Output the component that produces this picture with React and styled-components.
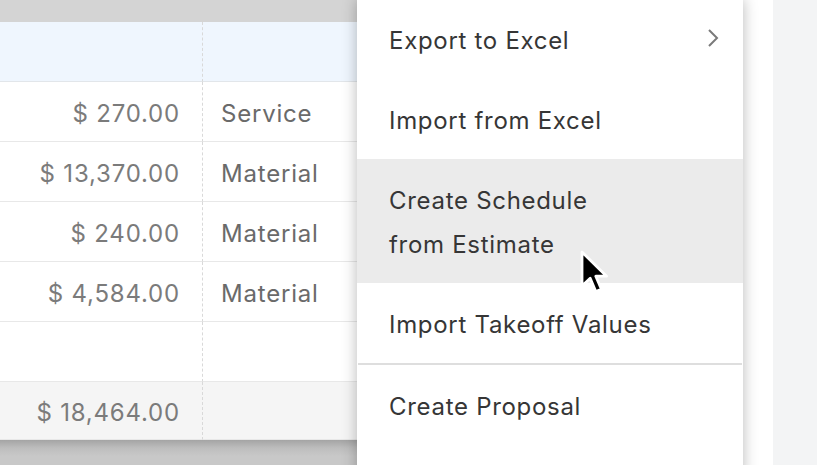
import React from "react";
import styled, { createGlobalStyle } from "styled-components";

const Global = createGlobalStyle`
  html, body { margin: 0; padding: 0; background: #ffffff; }
  body { font-family: Inter, "Liberation Sans", Arial, sans-serif; overflow: hidden; }
  * { box-sizing: border-box; }
`;

const Page = styled.div`
  position: relative;
  width: 817px;
  height: 465px;
  display: flex;
  overflow: hidden;
  background: #ffffff;
`;

const Main = styled.div`
  width: 773px;
  display: flex;
  flex-direction: column;
`;

const SidePanel = styled.div`
  flex: 1;
  background: #f3f4f5;
`;

const TopBar = styled.div`
  height: 22px;
  width: 743px;
  background: #d4d4d4;
`;

const Table = styled.div`
  width: 743px;
  display: grid;
  grid-template-columns: 203px 1fr;
`;

const Cell = styled.div`
  height: ${(p) => p.$h || 60}px;
  display: flex;
  align-items: center;
  padding-top: 3px;
  border-bottom: 1px solid ${(p) => (p.$head ? "#e2e6ea" : "#e8e8e8")};
  background: ${(p) => (p.$head ? "#eff6fe" : p.$total ? "#f5f5f5" : "#ffffff")};
  font-size: 24px;
  letter-spacing: 0.8px;
`;

const AmountCell = styled(Cell)`
  justify-content: flex-end;
  padding-right: 22px;
  color: #7b7b7b;
  border-right: 1px dashed #d9d9d9;
`;

const TypeCell = styled(Cell)`
  padding-left: 18px;
  color: #6a6a6a;
`;

const BottomShade = styled.div`
  flex: 1;
  width: 743px;
  background: linear-gradient(#a4a4a4 0px, #bdbdbd 8px, #c8c8c8 16px);
`;

const Menu = styled.div`
  position: absolute;
  left: 357px;
  top: -1px;
  width: 386px;
  height: 480px;
  background: #ffffff;
  box-shadow: 0 0 14px rgba(0, 0, 0, 0.28);
  display: flex;
  flex-direction: column;
`;

const MenuItem = styled.div`
  display: flex;
  align-items: center;
  justify-content: space-between;
  padding: 20px 24px 16px 32px;
  line-height: 44px;
  font-size: 24px;
  letter-spacing: 0.7px;
  color: #363636;
  background: ${(p) => (p.$hover ? "#ebebeb" : "transparent")};
`;

const Separator = styled.div`
  height: 2px;
  background: #dedede;
  margin: 0 1px;
`;

const Chevron = styled.svg`
  width: 14px;
  height: 20px;
  margin-top: -6px;
  margin-right: -1px;
`;

const Cursor = styled.svg`
  position: absolute;
  left: 579px;
  top: 249px;
  width: 30px;
  height: 48px;
`;

const rows = [
  { amount: "$ 270.00", type: "Service" },
  { amount: "$ 13,370.00", type: "Material" },
  { amount: "$ 240.00", type: "Material" },
  { amount: "$ 4,584.00", type: "Material" },
  { amount: "", type: "" },
];

export default function App() {
  return (
    <>
      <Global />
      <Page>
        <Main>
          <TopBar />
          <Table>
            <AmountCell $head />
            <TypeCell $head />
            {rows.map((r, i) => (
              <React.Fragment key={i}>
                <AmountCell>{r.amount}</AmountCell>
                <TypeCell>{r.type}</TypeCell>
              </React.Fragment>
            ))}
            <AmountCell $total $h={58}>$ 18,464.00</AmountCell>
            <TypeCell $total $h={58} />
          </Table>
          <BottomShade />
        </Main>
        <SidePanel />
        <Menu>
          <MenuItem>
            <span>Export to Excel</span>
            <Chevron viewBox="0 0 14 20">
              <path d="M3 2 L11 10 L3 18" fill="none" stroke="#7a7a7a" strokeWidth="2" />
            </Chevron>
          </MenuItem>
          <MenuItem>
            <span>Import from Excel</span>
          </MenuItem>
          <MenuItem $hover>
            <span>
              Create Schedule
              <br />
              from Estimate
            </span>
          </MenuItem>
          <MenuItem>
            <span>Import Takeoff Values</span>
          </MenuItem>
          <Separator />
          <MenuItem>
            <span>Create Proposal</span>
          </MenuItem>
        </Menu>
        <Cursor viewBox="0 0 15 24">
          <path
            d="M1.5 1.5 L1.5 18.5 L5.6 14.6 L8.4 21.3 L11.2 20.1 L8.4 13.6 L13.8 13.6 Z"
            fill="#000"
            stroke="#fff"
            strokeWidth="1.4"
            strokeLinejoin="round"
          />
        </Cursor>
      </Page>
    </>
  );
}
